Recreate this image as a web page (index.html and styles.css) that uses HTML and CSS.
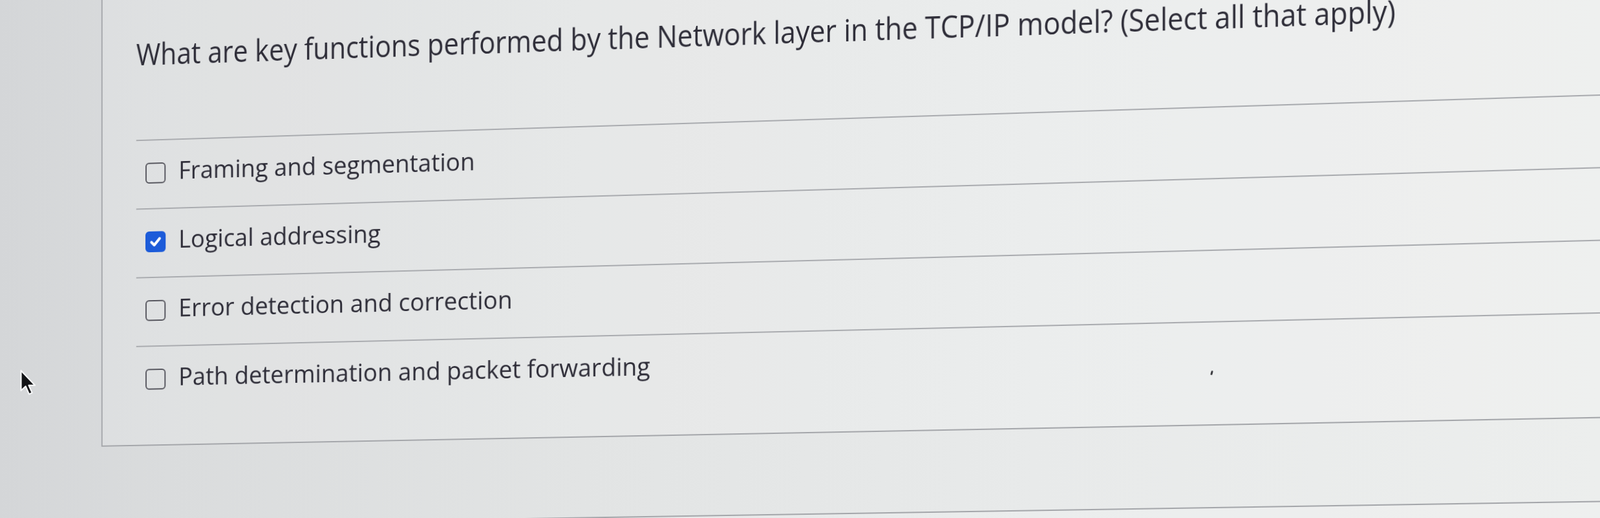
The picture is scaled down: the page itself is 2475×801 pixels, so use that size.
FILE: index.html
```html
<!DOCTYPE html>
<html lang="en">
<head>
<meta charset="utf-8">
<title>Question</title>
<link rel="stylesheet" href="styles.css">
</head>
<body>
<div class="page">
  <section class="panel">
    <h1 class="question">What are key functions performed by the Network layer in the TCP/IP model? (Select all that apply)</h1>
    <ul class="options">
      <li class="option">
        <span class="box"></span>
        <span class="label">Framing and segmentation</span>
      </li>
      <li class="option">
        <span class="box checked">
          <svg viewBox="0 0 20 20" width="23" height="23"><path d="M4.2 10.6 L8.2 14.6 L15.8 5.6" fill="none" stroke="#ffffff" stroke-width="3.6" stroke-linecap="round" stroke-linejoin="round"/></svg>
        </span>
        <span class="label">Logical addressing</span>
      </li>
      <li class="option">
        <span class="box"></span>
        <span class="label">Error detection and correction</span>
      </li>
      <li class="option">
        <span class="box"></span>
        <span class="label">Path determination and packet forwarding</span>
      </li>
    </ul>
  </section>
  <section class="panel next"></section>
</div>
<svg class="cursor" viewBox="0 0 13 21" width="27" height="42"><path d="M1 1 L1 16.5 L4.6 13.2 L7.2 19.2 L9.6 18.2 L7 12.4 L11.8 12.4 Z" fill="#121316" stroke="#f4f5f6" stroke-width="1.1" stroke-linejoin="round"/></svg>
<span class="speck"></span>
</body>
</html>
```
FILE: styles.css
```css
html, body {
  margin: 0;
  padding: 0;
}
body {
  width: 2475px;
  height: 801px;
  overflow: hidden;
  position: relative;
  background: linear-gradient(to right, #d4d6d8 0px, #dadcdd 260px, #e2e4e4 900px, #e8eaea 1600px, #eceeed 2475px);
  font-family: "Open Sans", "Noto Sans", sans-serif;
  color: #2e2d38;
}
.page {
  display: flex;
  flex-direction: column;
  width: 2475px;
  transform-origin: 1250px 1440px;
  transform: perspective(2000px) rotateY(-2.83deg);
}
.panel {
  margin-top: -80px;
  margin-left: 125px;
  width: 2700px;
  border-left: 2px solid #a4a6aa;
  border-bottom: 2px solid #a4a6aa;
  padding-left: 55px;
  padding-top: 104px;
  background: rgba(255, 255, 255, 0.14);
}
.question {
  width: max-content;
  margin: 0 0 112px 0;
  font-size: 47px;
  font-weight: 500;
  line-height: 48px;
  white-space: nowrap;
  transform-origin: 0 50%;
  transform: scaleX(0.913);
}
.options {
  list-style: none;
  margin: 0;
  padding: 0;
}
.option {
  display: flex;
  align-items: flex-start;
  height: 107px;
  border-top: 2px solid #a9abaf;
  padding-left: 15px;
}
.option:last-child {
  height: 155px;
}
.box {
  flex: none;
  width: 29px;
  height: 29px;
  margin-top: 35px;
  border: 2.5px solid #55555d;
  border-radius: 6px;
  display: flex;
  align-items: center;
  justify-content: center;
}
.box.checked {
  background: #1c5bd9;
  border-color: #1c5bd9;
}
.label {
  margin-left: 21px;
  margin-top: 21px;
  font-size: 38px;
  font-weight: 500;
  line-height: 52px;
  white-space: nowrap;
}
.panel.next {
  margin-top: 124px;
  height: 300px;
  border-top: 2px solid #a4a6aa;
  border-bottom: none;
  padding: 0;
}
.cursor {
  position: absolute;
  left: 30px;
  top: 571px;
}
.speck {
  position: absolute;
  left: 1873px;
  top: 573px;
  width: 3px;
  height: 7px;
  border-radius: 2px;
  background: #3b3b40;
  transform: rotate(15deg);
}
```
